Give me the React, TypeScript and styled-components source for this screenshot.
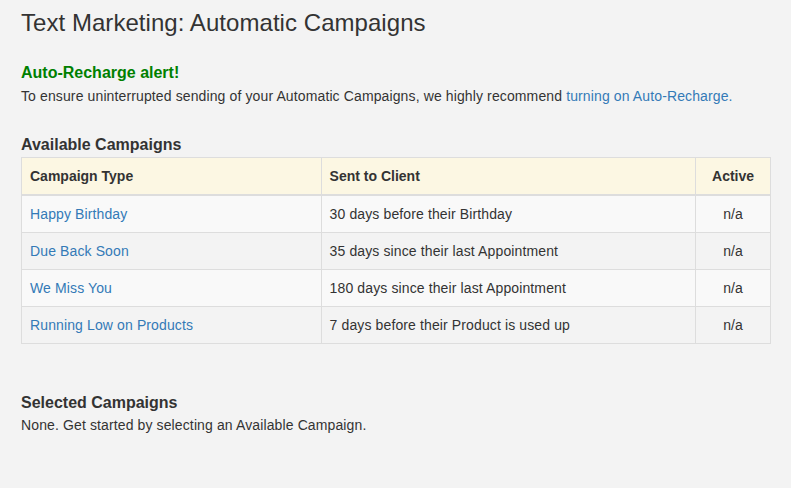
import React from 'react';
import styled, { createGlobalStyle } from 'styled-components';

const GlobalStyle = createGlobalStyle`
  html, body {
    margin: 0;
    padding: 0;
    background: #f3f3f3;
  }
  body {
    font-family: "Liberation Sans", Arial, Helvetica, sans-serif;
    font-size: 14px;
    line-height: 20px;
    letter-spacing: 0.12px;
    color: #333;
  }
`;

const Page = styled.div`
  padding: 10px 20px 40px 21px;
`;

const Title = styled.h1`
  margin: 0 0 28px;
  font-size: 24px;
  font-weight: normal;
  line-height: 26px;
  letter-spacing: 0.05px;
  color: #333;
`;

const AlertHeading = styled.h4`
  margin: 0 0 4px;
  font-size: 16px;
  line-height: 18px;
  font-weight: bold;
  letter-spacing: 0;
  color: #008000;
`;

const Paragraph = styled.p`
  margin: 0;
`;

const Link = styled.a`
  color: #337ab7;
  text-decoration: none;
  cursor: pointer;
`;

const SectionHeading = styled.h4<{ $top: number }>`
  margin: ${(p) => p.$top}px 0 3px;
  font-size: 16px;
  line-height: 18px;
  font-weight: bold;
  letter-spacing: 0;
  color: #333;
`;

const Table = styled.table`
  width: 100%;
  border-collapse: collapse;
  border: 1px solid #ddd;
  table-layout: fixed;
`;

const HeadRow = styled.tr`
  background: #fcf7e3;
`;

const Th = styled.th<{ $width: string; $center?: boolean }>`
  box-sizing: border-box;
  width: ${(p) => p.$width};
  padding: 8px;
  border: 1px solid #ddd;
  border-bottom: 2px solid #ddd;
  text-align: ${(p) => (p.$center ? 'center' : 'left')};
  font-weight: bold;
  line-height: 20px;
  letter-spacing: 0;
`;

const Row = styled.tr<{ $odd: boolean }>`
  background: ${(p) => (p.$odd ? '#f9f9f9' : 'transparent')};
`;

const Td = styled.td<{ $center?: boolean }>`
  padding: 8px;
  border: 1px solid #ddd;
  text-align: ${(p) => (p.$center ? 'center' : 'left')};
  line-height: 20px;
`;

const campaigns = [
  { name: 'Happy Birthday', sent: '30 days before their Birthday' },
  { name: 'Due Back Soon', sent: '35 days since their last Appointment' },
  { name: 'We Miss You', sent: '180 days since their last Appointment' },
  { name: 'Running Low on Products', sent: '7 days before their Product is used up' },
];

const App = () => (
  <>
    <GlobalStyle />
    <Page>
      <Title>Text Marketing: Automatic Campaigns</Title>
      <AlertHeading>Auto-Recharge alert!</AlertHeading>
      <Paragraph>
        To ensure uninterrupted sending of your Automatic Campaigns, we highly recommend{' '}
        <Link>turning on Auto-Recharge.</Link>
      </Paragraph>

      <SectionHeading $top={30}>Available Campaigns</SectionHeading>
      <Table>
        <thead>
          <HeadRow>
            <Th $width="40%">Campaign Type</Th>
            <Th $width="50%">Sent to Client</Th>
            <Th $width="10%" $center>
              Active
            </Th>
          </HeadRow>
        </thead>
        <tbody>
          {campaigns.map((c, i) => (
            <Row key={c.name} $odd={i % 2 === 0}>
              <Td>
                <Link>{c.name}</Link>
              </Td>
              <Td>{c.sent}</Td>
              <Td $center>n/a</Td>
            </Row>
          ))}
        </tbody>
      </Table>

      <SectionHeading $top={50}>Selected Campaigns</SectionHeading>
      <Paragraph>None. Get started by selecting an Available Campaign.</Paragraph>
    </Page>
  </>
);

export default App;
